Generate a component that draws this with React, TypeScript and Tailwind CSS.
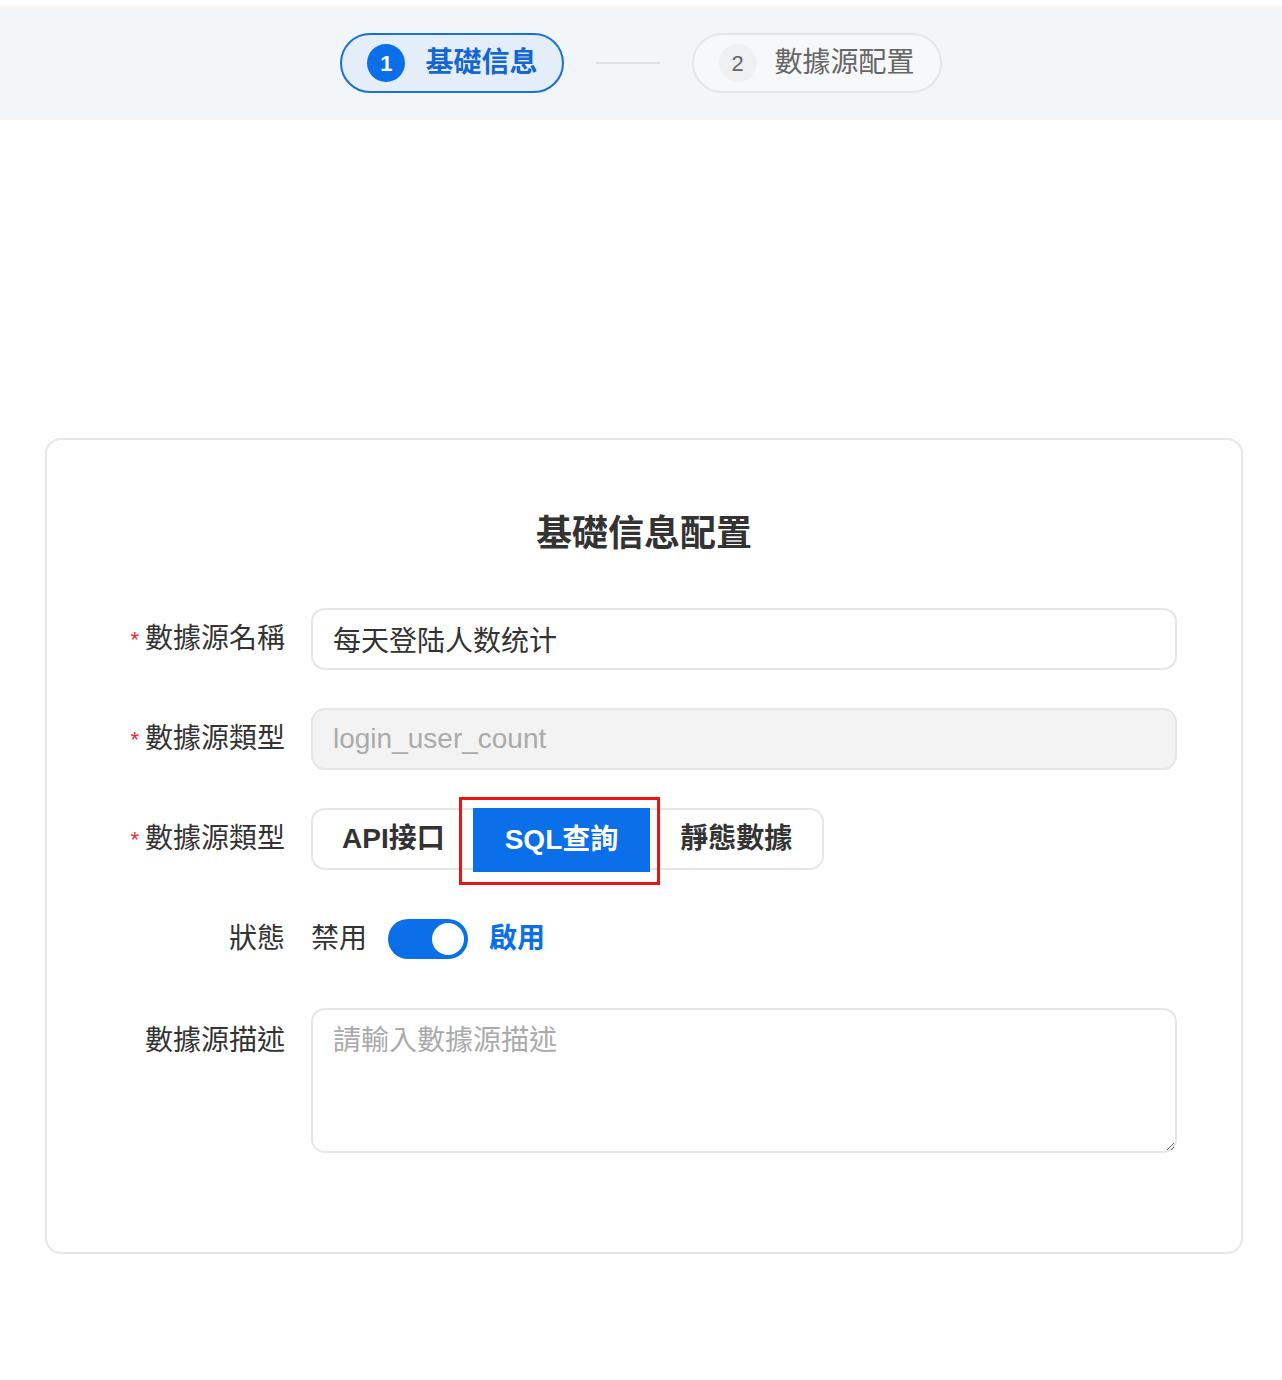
import React, { useState } from "react";

const FONT = { fontFamily: '"Liberation Sans", "Noto Sans CJK TC", sans-serif' };

const FormLabel = ({ text, required }: { text: string; required?: boolean }) => (
  <div className="flex h-[62px] items-center justify-end text-[28px] text-[#333]">
    {required && <span className="mr-[6px] text-[22px] text-[#f5222d]">*</span>}
    {text}
  </div>
);

export default function App() {
  const [enabled, setEnabled] = useState(true);
  const [type, setType] = useState("sql");

  const types = [
    { key: "api", label: "API接口", pad: "pl-[29px] pr-[28px]" },
    { key: "sql", label: "SQL查詢", pad: "px-[32px]" },
    { key: "static", label: "靜態數據", pad: "px-[30px]" },
  ];

  return (
    <div className="min-h-[1380px] bg-white" style={FONT}>
      {/* steps */}
      <div className="mt-[6px] flex h-[114px] items-center justify-center gap-8 bg-[#f3f6f9]">
        <div className="flex h-[60px] items-center gap-[20px] rounded-full border-2 border-[#1a6fd8] bg-[#e4eefb] pl-[25px] pr-[24px]">
          <span className="flex h-[38px] w-[38px] items-center justify-center rounded-full bg-[#0a6fe8] text-[22px] font-bold text-white">
            1
          </span>
          <span className="text-[28px] font-bold text-[#1467d0]">基礎信息</span>
        </div>
        <div className="h-[2px] w-[64px] bg-[#dcdfe4]" />
        <div className="flex h-[60px] items-center gap-[18px] rounded-full border-2 border-[#e3e6ea] bg-[#f6f8fa] px-[25px]">
          <span className="flex h-[38px] w-[38px] items-center justify-center rounded-full bg-[#eff0f2] text-[22px] text-[#666]">
            2
          </span>
          <span className="text-[28px] text-[#666]">數據源配置</span>
        </div>
      </div>

      {/* card */}
      <div className="ml-[45px] mt-[318px] w-[1198px] rounded-[16px] border-2 border-[#e6e6e6] pb-[99px] pt-[70px]">
        <h2 className="text-center text-[36px] font-bold leading-[48px] text-[#333]">基礎信息配置</h2>

        <div className="mt-[50px] grid grid-cols-[238px_866px] gap-x-[26px] gap-y-[38px]">
          <FormLabel text="數據源名稱" required />
          <input
            className="h-[62px] rounded-[14px] border-2 border-[#e6e6e6] px-[20px] text-[28px] text-[#333] outline-none"
            defaultValue="每天登陆人数统计"
            style={FONT}
          />

          <FormLabel text="數據源類型" required />
          <input
            className="h-[62px] rounded-[14px] border-2 border-[#e6e6e6] bg-[#f3f3f3] px-[20px] text-[28px] text-[#aaa] outline-none"
            value="login_user_count"
            disabled
            style={FONT}
          />

          <FormLabel text="數據源類型" required />
          <div className="flex">
            <div className="relative flex h-[62px] rounded-[14px] border-2 border-[#e6e6e6]">
              {types.map((t) =>
                t.key === type ? (
                  <div key={t.key} className="relative -my-[2px] flex">
                    <button
                      onClick={() => setType(t.key)}
                      className={`h-[64px] bg-[#0a6fe8] text-[28px] font-bold text-white ${t.pad}`}
                    >
                      {t.label}
                    </button>
                    <div className="pointer-events-none absolute -bottom-[15px] -left-[14px] -right-[10px] -top-[11px] border-[3px] border-[#ee1111]" />
                  </div>
                ) : (
                  <button
                    key={t.key}
                    onClick={() => setType(t.key)}
                    className={`text-[28px] font-bold text-[#333] ${t.pad}`}
                  >
                    {t.label}
                  </button>
                )
              )}
            </div>
          </div>

          <FormLabel text="狀態" />
          <div className="flex h-[62px] items-center gap-[21px] text-[28px]">
            <span className="text-[#333]">禁用</span>
            <button
              onClick={() => setEnabled(!enabled)}
              className={`flex h-[40px] w-[80px] items-center rounded-full p-[4px] ${
                enabled ? "justify-end bg-[#0a6fe8]" : "justify-start bg-[#bfbfbf]"
              }`}
            >
              <span className="h-[32px] w-[32px] rounded-full bg-white" />
            </button>
            <span className="font-bold text-[#0a6fe8]">啟用</span>
          </div>

          <div className="flex items-start justify-end pt-[12px] text-[28px] text-[#333]">數據源描述</div>
          <textarea
            className="h-[145px] rounded-[14px] border-2 border-[#e6e6e6] px-[20px] py-[10px] text-[28px] text-[#333] outline-none placeholder:text-[#aaa]"
            placeholder="請輸入數據源描述"
            style={FONT}
          />
        </div>
      </div>
    </div>
  );
}
